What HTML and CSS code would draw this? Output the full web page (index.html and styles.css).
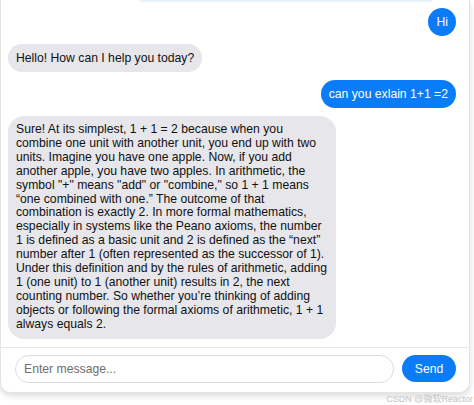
FILE: index.html
```html
<!DOCTYPE html>
<html>
<head>
<meta charset="utf-8">
<link rel="stylesheet" href="styles.css">
</head>
<body>
<div class="chat">
  <div class="messages">
    <div class="prev"></div>
    <div class="msg user">Hi</div>
    <div class="msg bot">Hello! How can I help you today?</div>
    <div class="msg user">can you exlain 1+1 =2</div>
    <div class="msg bot long">Sure! At its simplest, 1 + 1 = 2 because when you combine one unit with another unit, you end up with two units. Imagine you have one apple. Now, if you add another apple, you have two apples. In arithmetic, the symbol "+" means "add" or "combine," so 1 + 1 means “one combined with one.” The outcome of that combination is exactly 2. In more formal mathematics, especially in systems like the Peano axioms, the number 1 is defined as a basic unit and 2 is defined as the “next” number after 1 (often represented as the successor of 1). Under this definition and by the rules of arithmetic, adding 1 (one unit) to 1 (another unit) results in 2, the next counting number. So whether you’re thinking of adding objects or following the formal axioms of arithmetic, 1 + 1 always equals 2.</div>
  </div>
  <div class="composer">
    <input class="field" type="text" placeholder="Enter message...">
    <button class="send">Send</button>
  </div>
</div>
<div class="watermark">CSDN @微软Reactor</div>
</body>
</html>
```
FILE: styles.css
```css
html, body {
  margin: 0;
  padding: 0;
  background: #fff;
  font-family: "Liberation Sans", Arial, "Noto Sans CJK SC", sans-serif;
  font-size: 12.2px;
}
.chat {
  width: 470px;
  box-sizing: border-box;
  border: 1px solid #e4e4e4;
  border-top: none;
  border-radius: 0 0 10px 10px;
  box-shadow: 0 3px 6px rgba(0, 0, 0, 0.14);
  background: #fff;
}
.messages {
  display: flex;
  flex-direction: column;
  gap: 8px;
  padding: 0 13px 8px 7px;
}
.prev {
  height: 2px;
  width: 292px;
  margin-left: 132px;
  margin-bottom: -2px;
  background: #e9f2fd;
}
.msg {
  padding: 7px 8px;
  line-height: 14px;
  border-radius: 15px;
}
.user {
  align-self: flex-end;
  background: #0a7cf8;
  color: #fff;
}
.bot {
  align-self: flex-start;
  background: #e6e6eb;
  color: #111;
}
.long {
  width: 314px;
  padding: 7px 6px 7px 8px;
  line-height: 13.9px;
  border-radius: 16px;
}
.composer {
  display: flex;
  align-items: center;
  gap: 8px;
  border-top: 1px solid #e6e6e6;
  padding: 7px 13px 9px 14px;
}
.field {
  flex: 1;
  height: 28px;
  box-sizing: border-box;
  border: 1px solid #dcdcdc;
  border-radius: 14px;
  padding: 0 8px;
  font-family: inherit;
  font-size: 12.2px;
  color: #333;
  outline: none;
}
.field::placeholder {
  color: #6e6e6e;
}
.send {
  width: 54px;
  height: 27px;
  border: none;
  border-radius: 14px;
  background: #0a7cf8;
  color: #fff;
  font-family: inherit;
  font-size: 12.2px;
}
.watermark {
  text-align: right;
  font-size: 9px;
  color: #c4c4c4;
  padding-right: 1px;
  margin-top: 1px;
  line-height: 10px;
}
```
